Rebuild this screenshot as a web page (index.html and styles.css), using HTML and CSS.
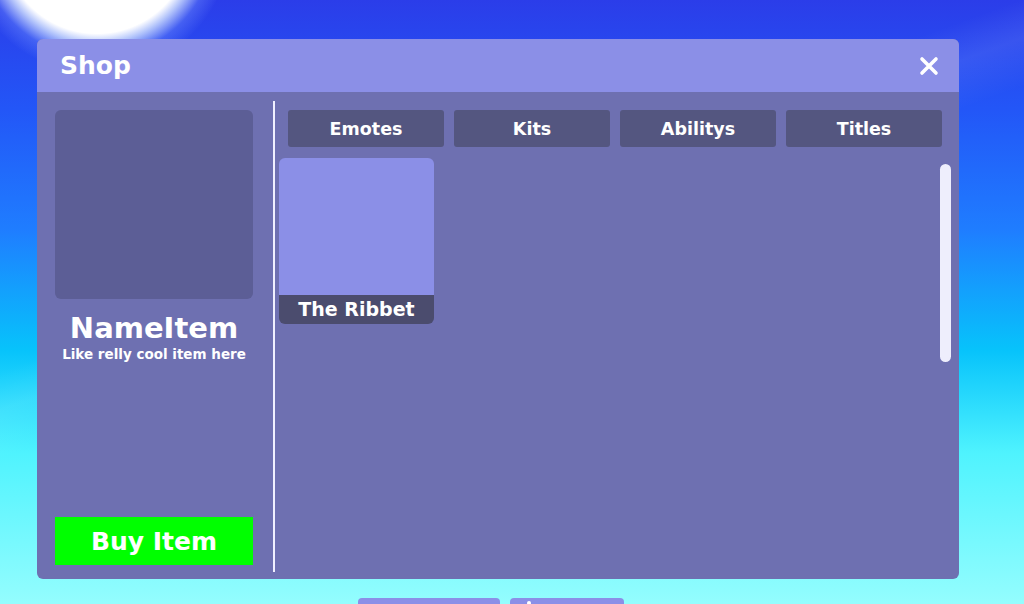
FILE: index.html
```html
<!DOCTYPE html>
<html lang="en">
  <head>
    <meta charset="UTF-8" />
    <meta name="viewport" content="width=device-width, initial-scale=1.0" />
    <title>Shop</title>
    <link rel="stylesheet" href="styles.css">
  </head>
  <body>
    <div class="sun"></div>
    <div class="shop">
      <header class="shop-head">
        <h1>Shop</h1>
        <button class="close" aria-label="Close">
          <svg width="20" height="20" viewBox="0 0 20 20">
            <path d="M3 3 L17 17 M17 3 L3 17" stroke="#fff" stroke-width="3.6" stroke-linecap="round" />
          </svg>
        </button>
      </header>
      <main class="shop-body">
        <section class="side">
          <div class="preview"></div>
          <p class="item-name">NameItem</p>
          <p class="item-desc">Like relly cool item here</p>
          <button class="buy">Buy Item</button>
        </section>
        <div class="divider"></div>
        <section class="catalog">
          <nav class="tabs">
            <button class="tab">Emotes</button>
            <button class="tab">Kits</button>
            <button class="tab">Abilitys</button>
            <button class="tab">Titles</button>
          </nav>
          <div class="list">
            <div class="items">
              <div class="card">
                <div class="card-pic"></div>
                <div class="card-label">The Ribbet</div>
              </div>
            </div>
            <div class="scrollbar"></div>
          </div>
        </section>
      </main>
    </div>
    <footer class="hotbar">
      <div class="hot-btn wide"></div>
      <div class="hot-btn"><span class="dot"></span></div>
    </footer>
  </body>
</html>
```

FILE: styles.css
```css
* {
  margin: 0;
  padding: 0;
  box-sizing: border-box;
}

body {
  font-family: "DejaVu Sans", Inter, sans-serif;
  font-weight: 700;
  color: #fff;
  height: 604px;
  overflow: hidden;
  position: relative;
  background:
    linear-gradient(160deg, transparent 38%, rgba(255, 255, 255, 0.08) 42%, transparent 47%),
    linear-gradient(180deg, #2b3de9 0%, #2356f7 18%, #1f7dff 38%, #07c3fb 58%, #4ff3fe 75%, #94fdfe 100%);
}

button {
  border: none;
  font-family: inherit;
  font-weight: 700;
  color: #fff;
  cursor: pointer;
}

/* glow in the sky, top left */
.sun {
  position: absolute;
  left: -38px;
  top: -196px;
  width: 270px;
  height: 270px;
  border-radius: 50%;
  background: radial-gradient(circle 135px at center, #fff 0%, #fff 70%, rgba(215, 230, 255, 0.8) 77%, rgba(120, 150, 255, 0.35) 88%, rgba(60, 90, 240, 0) 100%);
}

/* WINDOW */
.shop {
  position: relative;
  width: 922px;
  height: 540px;
  margin: 39px 0 0 37px;
  border-radius: 6px;
  overflow: hidden;
  background: #6e70b1;
}

.shop-head {
  height: 53px;
  background: #8b8fe7;
  display: flex;
  align-items: center;
  justify-content: space-between;
  padding: 0 20px 0 23px;
}

h1 {
  font-size: 25px;
  font-weight: 700;
}

.close {
  background: none;
  width: 20px;
  height: 20px;
  display: flex;
}

.shop-body {
  display: flex;
  height: 487px;
}

/* LEFT SIDE */
.side {
  width: 198px;
  margin: 18px 0 14px 18px;
  display: flex;
  flex-direction: column;
  align-items: center;
}

.preview {
  width: 198px;
  height: 189px;
  border-radius: 6px;
  background: #5c5e96;
}

.item-name {
  margin-top: 13px;
  font-size: 29px;
  line-height: 33px;
}

.item-desc {
  font-size: 13.5px;
  line-height: 15px;
  margin-top: 2px;
}

.buy {
  margin-top: auto;
  width: 198px;
  height: 48px;
  background: #00ff00;
  font-size: 25px;
}

.divider {
  width: 2px;
  margin: 9px 0 7px 20px;
  background: #f0f0ff;
}

/* RIGHT SIDE */
.catalog {
  flex: 1;
  padding: 18px 8px 0 4px;
  display: flex;
  flex-direction: column;
}

.tabs {
  display: flex;
  gap: 10px;
  padding-left: 9px;
}

.tab {
  width: 156px;
  height: 37px;
  border-radius: 3px;
  background: #545680;
  font-size: 17.5px;
}

.list {
  display: flex;
  margin-top: 11px;
}

.items {
  flex: 1;
}

.card {
  width: 155px;
  height: 166px;
  border-radius: 6px;
  overflow: hidden;
  display: flex;
  flex-direction: column;
}

.card-pic {
  flex: 1;
  background: #8b8fe7;
}

.card-label {
  height: 29px;
  background: #4b4c6e;
  text-align: center;
  font-size: 19px;
  line-height: 29px;
}

.scrollbar {
  width: 11px;
  height: 198px;
  margin-top: 6px;
  border-radius: 6px;
  background: #eeeefc;
}

/* BOTTOM BAR */
.hotbar {
  display: flex;
  gap: 10px;
  margin: 19px 0 0 358px;
}

.hot-btn {
  width: 114px;
  height: 30px;
  border-radius: 4px;
  background: #8b8fe7;
  position: relative;
}

.hot-btn.wide {
  width: 142px;
}

.dot {
  position: absolute;
  left: 17px;
  top: 3px;
  width: 4px;
  height: 4px;
  border-radius: 50%;
  background: #fff;
}
```
